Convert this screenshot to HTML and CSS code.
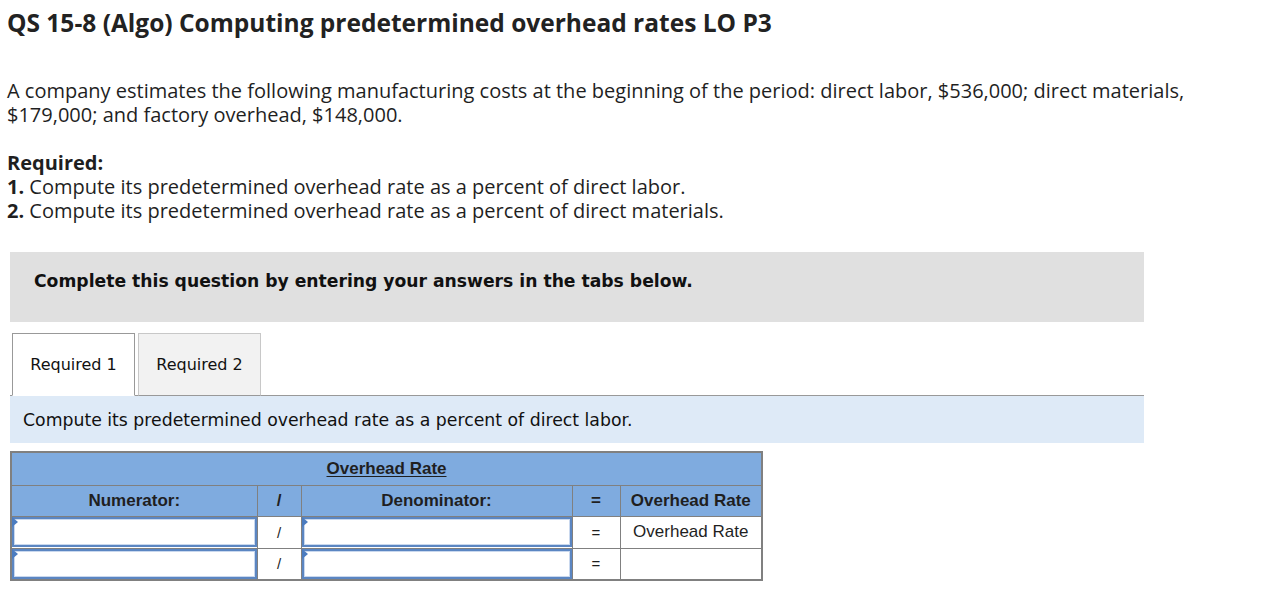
FILE: index.html
```html
<!DOCTYPE html>
<html>
<head>
<meta charset="utf-8">
<link rel="stylesheet" href="styles.css">
</head>
<body>
<div class="page">
  <h1 class="title">QS 15-8 (Algo) Computing predetermined overhead rates LO P3</h1>
  <p class="intro">A company estimates the following manufacturing costs at the beginning of the period: direct labor, $536,000; direct materials, $179,000; and factory overhead, $148,000.</p>
  <div class="required">
    <div class="req-head">Required:</div>
    <div><b>1.</b> Compute its predetermined overhead rate as a percent of direct labor.</div>
    <div><b>2.</b> Compute its predetermined overhead rate as a percent of direct materials.</div>
  </div>
  <div class="notice">Complete this question by entering your answers in the tabs below.</div>
  <div class="tabs">
    <div class="tab active">Required 1</div>
    <div class="tab">Required 2</div>
  </div>
  <div class="instruction">Compute its predetermined overhead rate as a percent of direct labor.</div>
  <table class="rate">
    <tr class="hdr">
      <th colspan="5" class="caption"><u>Overhead Rate</u></th>
    </tr>
    <tr class="hdr">
      <th class="c-num">Numerator:</th>
      <th class="c-op">/</th>
      <th class="c-den">Denominator:</th>
      <th class="c-op2">=</th>
      <th class="c-res">Overhead Rate</th>
    </tr>
    <tr>
      <td class="inp"><div class="box"><span class="tri"></span></div></td>
      <td class="op">/</td>
      <td class="inp"><div class="box"><span class="tri"></span></div></td>
      <td class="op">=</td>
      <td class="res">Overhead Rate</td>
    </tr>
    <tr>
      <td class="inp"><div class="box"><span class="tri"></span></div></td>
      <td class="op">/</td>
      <td class="inp"><div class="box"><span class="tri"></span></div></td>
      <td class="op">=</td>
      <td class="res"></td>
    </tr>
  </table>
</div>
</body>
</html>
```
FILE: styles.css
```css
* { box-sizing: border-box; }
body { margin: 0; background: #fff; color: #1f1f1f; }
.page { padding: 0 0 0 7px; font-family: "Open Sans", Lato, sans-serif; }
.title { margin: 0; padding-top: 8px; font-size: 24.5px; line-height: 30px; font-weight: 700; color: #222; }
.intro { margin: 41px 0 0; width: 1210px; font-size: 20px; line-height: 24px; }
.required { margin-top: 24px; font-size: 20px; line-height: 24px; }
.req-head { font-weight: 700; }
.required b { font-weight: 700; }
.notice {
  margin: 29px 0 0 3px; width: 1134px; height: 70px; background: #e0e0e0;
  padding: 17px 0 0 24px;
  font-family: "DejaVu Sans", Verdana, sans-serif; font-weight: 700; font-size: 17.2px; line-height: 24px; color: #111;
}
.tabs { display: flex; gap: 3px; margin: 11px 0 0 3px; width: 1134px; border-bottom: 1px solid #999; padding-left: 2px; }
.tab {
  width: 123px; height: 63px; margin-bottom: -1px;
  display: flex; align-items: center; justify-content: center;
  font-family: "DejaVu Sans", Verdana, sans-serif; font-size: 16px; color: #111;
  background: #f2f2f2; border: 1px solid #c8c8c8; border-bottom: 1px solid #999;
}
.tab.active { background: #fff; border-color: #999; border-bottom-color: #fff; }
.instruction {
  margin-left: 3px; width: 1134px; height: 47px; background: #deeaf7;
  padding: 12px 0 0 13px;
  font-family: "DejaVu Sans", Verdana, sans-serif; font-size: 17.3px; line-height: 24px; color: #111;
}
.rate {
  margin: 8px 0 0 3px; border-collapse: collapse; width: 753px;
  font-family: "Liberation Sans", Arial, sans-serif; font-size: 17px; color: #1f1f1f;
  border: 2px solid #808080;
}
.rate th, .rate td { border: 1px solid #808080; padding: 0; text-align: center; }
.hdr th { background: #7fabdf; font-weight: 700; height: 31px; }
.caption { height: 33px !important; }
.caption u { text-underline-offset: 2px; }
.c-num { width: 246px; }
.c-op { width: 44px; }
.c-den { width: 271px; }
.c-op2 { width: 48px; }
.rate td { height: 32px; background: #fff; }
.rate td.op { font-size: 15px; }
.rate td.res { font-size: 17px; }
.rate td.inp { padding: 0; }
.box {
  position: relative; height: 30px; margin: 0;
  border: 2px solid #5b86c2; box-shadow: inset 0 0 0 1px #c9d8ee; background: #fff;
}
.tri {
  position: absolute; left: -2px; top: -2px; width: 0; height: 0;
  border-top: 5px solid transparent; border-bottom: 5px solid transparent; border-left: 6px solid #4b7cc0;
}
```
